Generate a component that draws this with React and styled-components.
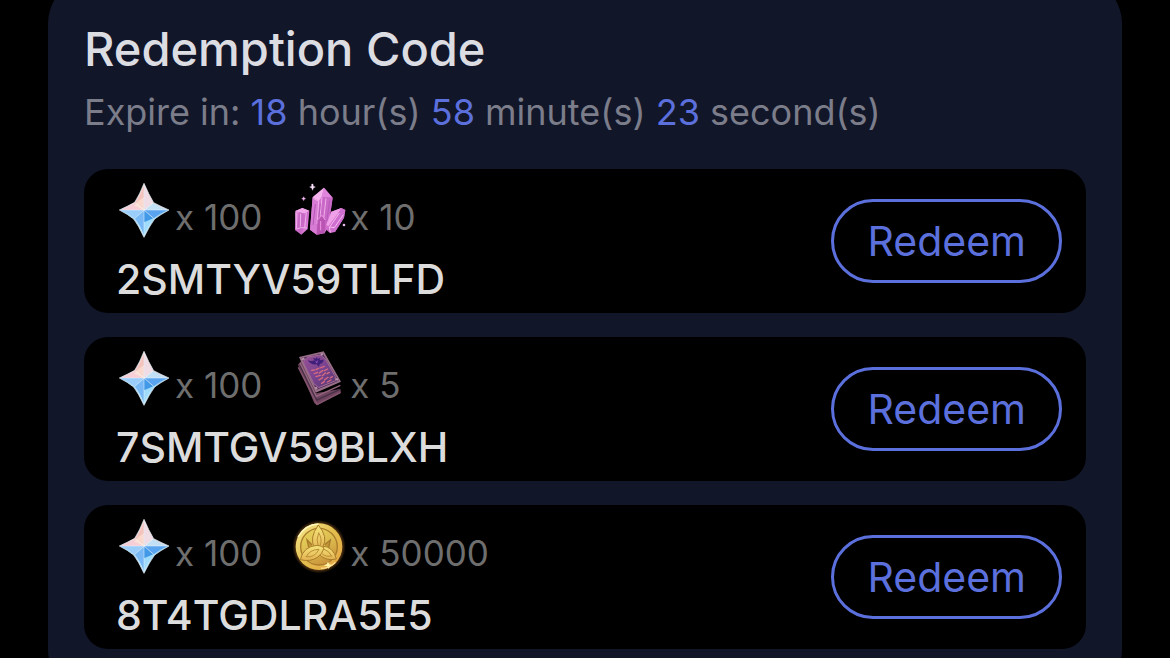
import { useId } from "react";
import styled, { createGlobalStyle } from "styled-components";

const GlobalStyle = createGlobalStyle`
  * {
    box-sizing: border-box;
  }
  body {
    margin: 0;
    background-color: #000;
    font-family: Inter, "Liberation Sans", sans-serif;
    overflow: hidden;
  }
`;

const Panel = styled.main`
  margin: -24px 48px 0;
  padding: 43px 36px 48px;
  border-radius: 48px;
  background-color: #121629;
`;

const Title = styled.h1`
  margin: 0;
  font-size: 47px;
  font-weight: 500;
  line-height: 60px;
  color: #dcdde2;
`;

const Expire = styled.p`
  margin: 9px 0 33px;
  font-size: 36px;
  line-height: 48px;
  color: #7b7d8a;
  span {
    color: #5b70dc;
  }
`;

const CodeList = styled.ul`
  display: flex;
  flex-direction: column;
  gap: 24px;
  margin: 0;
  padding: 0;
  list-style: none;
`;

const CodeCard = styled.li`
  display: flex;
  align-items: center;
  justify-content: space-between;
  padding: 0 24px 0 32px;
  border-radius: 24px;
  background-color: #000;
`;

const CodeInfo = styled.div`
  display: flex;
  flex-direction: column;
  gap: 10px;
  padding: 12px 0 6px;
`;

const Rewards = styled.div`
  display: flex;
  gap: 29px;
  height: 60px;
`;

const Reward = styled.div`
  display: flex;
  gap: 3px;
  svg {
    width: 56px;
    height: 56px;
    overflow: visible;
  }
`;

const Amount = styled.span`
  align-self: flex-end;
  font-size: 35px;
  line-height: 48px;
  color: #6e6e6e;
`;

const Code = styled.strong`
  font-size: 41px;
  font-weight: 500;
  line-height: 56px;
  color: #dcdcdc;
`;

const RedeemButton = styled.button`
  height: 84px;
  padding: 0 33px;
  border: 3px solid #5b70dc;
  border-radius: 42px;
  background-color: transparent;
  color: #5b70dc;
  font-family: inherit;
  font-size: 41px;
  cursor: pointer;
`;

const Primogem = () => {
  const id = useId();
  return (
    <svg viewBox="18 18 168 168" aria-hidden="true">
      <defs>
        <linearGradient id={id} x1="0" y1="0" x2="0" y2="1">
          <stop offset="0" stopColor="#fbe9dc" />
          <stop offset="0.45" stopColor="#f3d5dc" />
          <stop offset="0.52" stopColor="#9bd5f7" />
          <stop offset="1" stopColor="#d3f3ff" />
        </linearGradient>
      </defs>
      <path
        d="M102 25Q116 58 131 83Q152 94 177 105Q151 119 134 132Q119 152 102 187Q86 152 71 132Q54 118 28 105Q53 94 74 82Q89 59 102 25Z"
        fill={`url(#${id})`}
        stroke="#e4f4ff"
        strokeWidth="2"
        strokeLinejoin="round"
      />
      <path d="M102 29Q91 61 76 83L102 105Z" fill="#f4c3bc" />
      <path d="M102 29Q114 61 129 84L102 105Z" fill="#f0dce4" />
      <path d="M76 83Q56 95 33 105H102Z" fill="#f8ced6" />
      <path d="M129 84Q149 96 172 105H102Z" fill="#c2e0f5" />
      <path d="M33 105Q57 117 74 130L102 105Z" fill="#9bcdfb" />
      <path d="M74 130Q90 149 102 181V105Z" fill="#78b8f5" />
      <path d="M131 130Q115 150 102 181V105Z" fill="#9fdbfb" />
      <path d="M172 105Q148 117 131 130L102 105Z" fill="#5aa4ef" />
      <path d="M102 105V142L130 130Z" fill="#4199e7" />
      <path d="M102 105L72 93L84 79L102 66Z" fill="#fbe3d5" opacity="0.7" />
      <path d="M102 30V180M36 105H170" stroke="#e5f3ff" strokeWidth="2" opacity="0.8" />
      <path d="M76 83L131 130M129 84L74 130" stroke="#fff" strokeWidth="2" opacity="0.7" />
    </svg>
  );
};

const Crystal = () => {
  const id = useId();
  return (
    <svg viewBox="21 18 168 168" aria-hidden="true">
      <defs>
        <linearGradient id={id} x1="0" y1="0" x2="1" y2="1">
          <stop offset="0" stopColor="#f09bea" />
          <stop offset="0.5" stopColor="#cc68c8" />
          <stop offset="1" stopColor="#e58be1" />
        </linearGradient>
      </defs>
      <path d="M86 67L120 38L146 68L134 151L122 175L98 179L78 164Z" fill={`url(#${id})`} />
      <path d="M86 67L120 38L113 65L104 78Z" fill="#f5b2ec" />
      <path d="M120 38L146 68L113 65Z" fill="#df86dc" />
      <path d="M113 66L146 68L133 152L120 172L108 120Z" fill="#c968c6" />
      <path d="M86 67L104 78L98 148L98 179L78 164Z" fill="#d77bd4" />
      <path d="M88 70L104 79L99 147M114 67L108 125M126 70L118 140" fill="none" stroke="#f0aeea" strokeWidth="3" />
      <path d="M94 88L87 150M109 85L104 135M137 77L128 139" fill="none" stroke="#b65ab8" strokeWidth="3" />
      <path d="M98 179L101 134L114 121L124 135L122 174Z" fill="#ba55b4" />
      <path d="M101 134L114 121L124 135M110 138V166" fill="none" stroke="#ed96e6" strokeWidth="3" />
      <path d="M34 108L55 99L76 107L71 162L52 179L33 165Z" fill={`url(#${id})`} />
      <path d="M34 108L55 99L76 107L59 116Z" fill="#f0a6e8" />
      <path d="M44 112L40 167L52 178L58 158L60 115Z" fill="#c769c5" />
      <path d="M36 113L38 162L51 158L69 159M50 116L49 155M67 112L62 159" fill="none" stroke="#efb0ec" strokeWidth="3" />
      <path d="M142 110L172 99L184 105L180 128L153 171L138 174L126 164L127 149Z" fill={`url(#${id})`} />
      <path d="M142 110L172 99L160 118L133 154L127 149Z" fill="#efa0e9" />
      <path d="M172 99L184 105L180 128L153 171L139 159Z" fill="#ce6ece" />
      <path d="M166 114L137 156L151 158L178 119M136 156L139 173" fill="none" stroke="#f6baf0" strokeWidth="3" />
      <path d="M83 27L87 27L88 34L94 36L88 39L86 46L83 39L77 36L83 34Z" fill="#ffe4ff" stroke="#ffe4ff" />
      <path d="M59 65L61 69L65 71L61 73L59 77L57 73L53 71L57 69Z" fill="#f5b6f5" stroke="#f5b6f5" />
      <circle cx="180" cy="150" r="4" fill="#e9b8ee" />
    </svg>
  );
};

const Book = () => {
  const id = useId();
  return (
    <svg viewBox="21 18 168 168" aria-hidden="true">
      <defs>
        <linearGradient id={id} x1="0" y1="0" x2="1" y2="1">
          <stop offset="0" stopColor="#965096" />
          <stop offset="0.5" stopColor="#7a4390" />
          <stop offset="1" stopColor="#54386f" />
        </linearGradient>
      </defs>
      <path d="M42 65L52 53L95 151L169 138L171 149L100 187L91 181Z" fill="#70445f" />
      <path d="M43 73L99 184L169 149" fill="none" stroke="#85566f" strokeWidth="4" />
      <path d="M47 66L98 171L168 139" fill="none" stroke="#493047" strokeWidth="4" />
      <path d="M48 59L97 160L169 127" fill="none" stroke="#93667f" strokeWidth="4" />
      <path d="M45 42L119 25L171 116L95 149Z" fill="#9a7089" />
      <path d="M52 45L116 31L164 113L97 141Z" fill="#563064" />
      <path d="M60 51Q69 47 71 42L111 36Q116 43 124 48L154 101Q153 109 155 113L103 134Q98 126 90 123L59 61Z" fill={`url(#${id})`} stroke="#a56c91" strokeWidth="3" />
      <path d="M71 51Q82 57 91 52L87 45L95 47L98 42L101 48L109 44L107 51L119 50Q117 61 108 63L104 71L98 64Q80 67 71 51Z" fill="#402078" />
      <path d="M91 51L97 56L103 50L99 62Z" fill="#9250c2" />
      <path d="M83 82L91 81M96 80L103 76M108 75L121 70M91 92L101 88M106 90L116 83M121 83L131 78M96 101L109 97M115 98L124 90M129 92L136 88M105 111L116 104M121 111L132 103M138 105L145 101M113 121L121 116M130 117L141 111" stroke="#d66b82" strokeWidth="4" strokeLinecap="round" />
      <path d="M53 50L61 46M110 34L117 34M155 108L162 110M95 132L98 139" stroke="#b592a6" strokeWidth="6" />
    </svg>
  );
};

const Mora = () => {
  const id = useId();
  return (
    <svg viewBox="21 15 168 168" aria-hidden="true">
      <defs>
        <linearGradient id={`${id}-face`} x1="0" y1="0" x2="0.5" y2="1">
          <stop offset="0" stopColor="#ead65f" />
          <stop offset="0.55" stopColor="#dcbd50" />
          <stop offset="1" stopColor="#cc973c" />
        </linearGradient>
        <linearGradient id={`${id}-rim`} x1="0" y1="0" x2="1" y2="1">
          <stop offset="0" stopColor="#f7ea90" />
          <stop offset="0.5" stopColor="#e2bd4d" />
          <stop offset="1" stopColor="#e7a445" />
        </linearGradient>
        <linearGradient id={`${id}-leaf`} x1="0" y1="0" x2="0" y2="1">
          <stop offset="0" stopColor="#f5e57b" />
          <stop offset="1" stopColor="#e2b04f" />
        </linearGradient>
        <radialGradient id={`${id}-glow`}>
          <stop offset="0.84" stopColor="#a56924" stopOpacity="0.6" />
          <stop offset="1" stopColor="#a56924" stopOpacity="0" />
        </radialGradient>
      </defs>
      <circle cx="105" cy="104" r="80" fill={`url(#${id}-glow)`} />
      <circle cx="105" cy="104" r="70" fill={`url(#${id}-rim)`} />
      <circle cx="105" cy="104" r="55" fill={`url(#${id}-face)`} stroke="#ab7c2b" strokeWidth="4" />
      <path d="M84 99L69 83L75 109M122 98L139 84L133 112" fill="#c39634" stroke="#a67a2a" strokeWidth="4" />
      <g fill={`url(#${id}-leaf)`} stroke="#aa7d2b" strokeWidth="3" strokeLinejoin="round">
        <path d="M157 141Q149 104 114 102L94 108L103 124Q123 149 157 141Z" />
        <path d="M103 39Q75 78 91 107L105 121L117 103Q133 76 103 39Z" />
        <path d="M49 143Q58 103 99 100Q114 101 120 108Q115 125 102 135Q79 151 49 143Z" />
      </g>
      <g fill="none" stroke="#bc8f37" strokeWidth="3" strokeLinecap="round">
        <path d="M104 63Q95 83 102 98M104 63Q116 80 109 99" />
        <path d="M67 134Q76 113 105 112Q91 139 67 134Z" />
        <path d="M143 132Q134 115 121 112M143 132Q126 136 115 126" />
      </g>
      <path d="M42 75Q64 37 103 36" fill="none" stroke="#fff9bd" strokeWidth="4" />
      <path d="M132 149L136 157L147 159L138 163L134 171L130 163L119 161L128 157Z" fill="#fff3a7" />
      <path d="M111 169Q137 169 154 151" fill="none" stroke="#ffe398" strokeWidth="4" />
    </svg>
  );
};

const icons = {
  primogem: Primogem,
  crystal: Crystal,
  book: Book,
  mora: Mora,
};

const codes = [
  {
    code: "2SMTYV59TLFD",
    rewards: [
      { item: "primogem", amount: 100 },
      { item: "crystal", amount: 10 },
    ],
  },
  {
    code: "7SMTGV59BLXH",
    rewards: [
      { item: "primogem", amount: 100 },
      { item: "book", amount: 5 },
    ],
  },
  {
    code: "8T4TGDLRA5E5",
    rewards: [
      { item: "primogem", amount: 100 },
      { item: "mora", amount: 50000 },
    ],
  },
];

export default function App() {
  return (
    <>
      <GlobalStyle />
      <Panel>
        <Title>Redemption Code</Title>
        <Expire>
          Expire in: <span>18</span> hour(s) <span>58</span> minute(s){" "}
          <span>23</span> second(s)
        </Expire>
        <CodeList>
          {codes.map(({ code, rewards }) => (
            <CodeCard key={code}>
              <CodeInfo>
                <Rewards>
                  {rewards.map(({ item, amount }) => {
                    const Icon = icons[item];
                    return (
                      <Reward key={item}>
                        <Icon />
                        <Amount>x {amount}</Amount>
                      </Reward>
                    );
                  })}
                </Rewards>
                <Code>{code}</Code>
              </CodeInfo>
              <RedeemButton type="button">Redeem</RedeemButton>
            </CodeCard>
          ))}
        </CodeList>
      </Panel>
    </>
  );
}
